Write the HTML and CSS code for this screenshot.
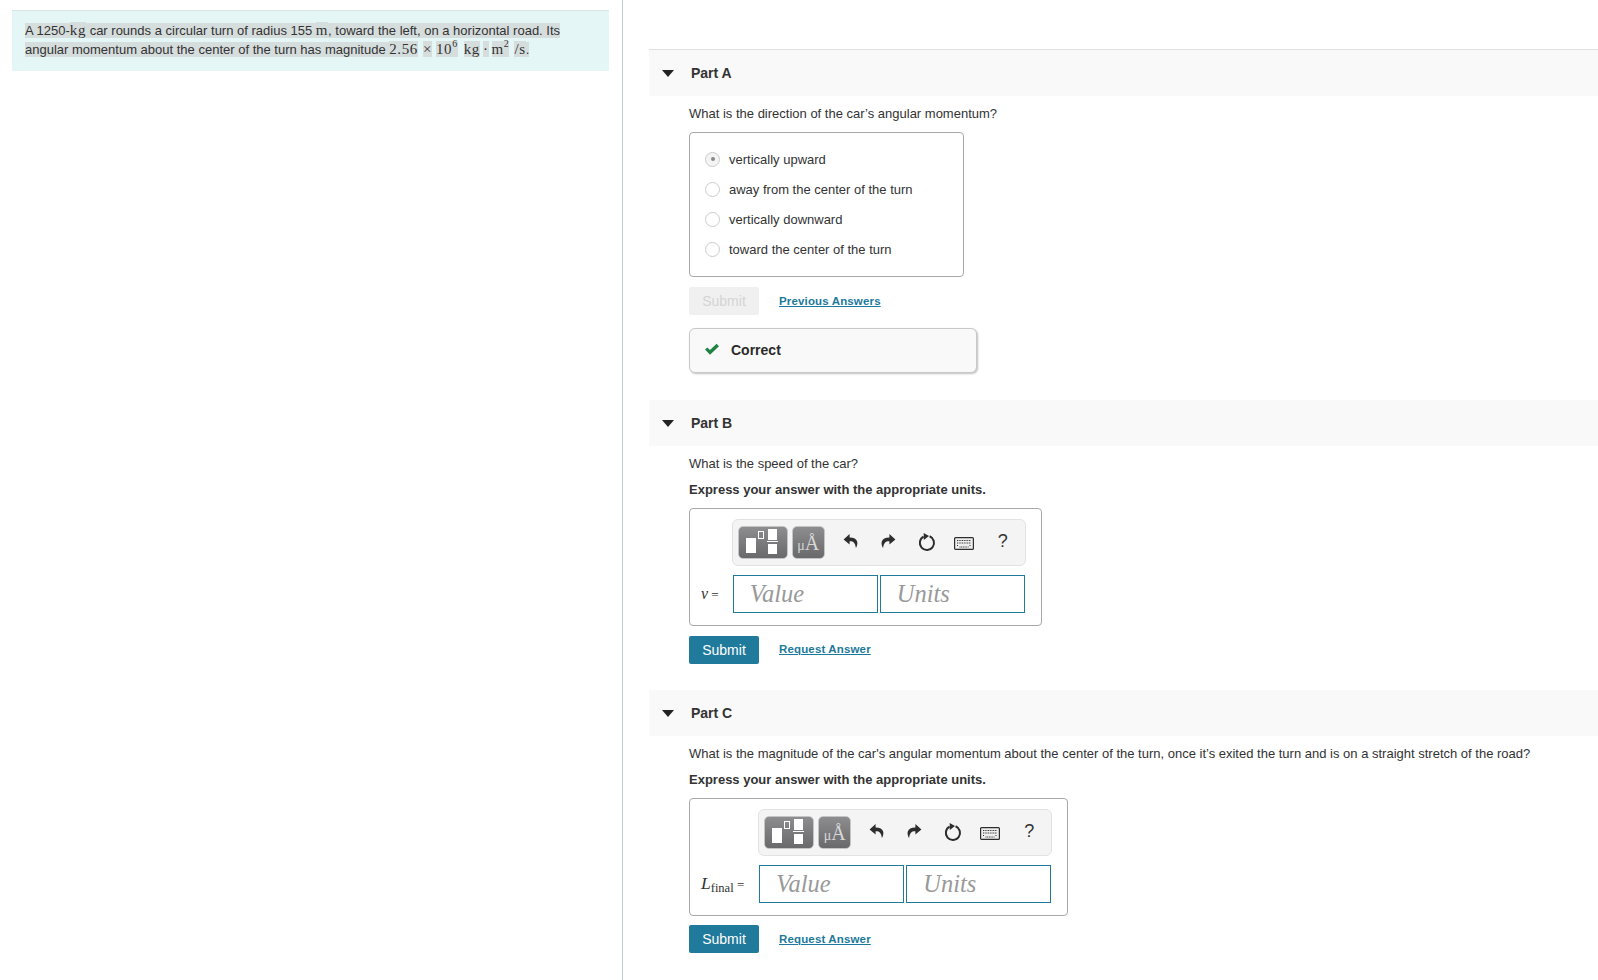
FILE: index.html
```html
<!DOCTYPE html>
<html lang="en">
<head>
<meta charset="utf-8">
<title>Angular momentum</title>
<link rel="stylesheet" href="styles.css">
</head>
<body>
<svg class="defs" width="0" height="0" aria-hidden="true">
  <defs>
    <symbol id="i-undo" viewBox="0 0 16 16"><path d="M6.6 1 L0.6 6.4 L6.6 11.6 V8.3 C10.2 8.1 12.2 9.7 12.9 15 C15.6 10.6 15.4 4.6 6.6 4.4 Z"/></symbol>
    <symbol id="i-reset" viewBox="0 0 18 20"><path class="ring" d="M11.6 4.3 A7.1 7.1 0 1 1 5.6 4.6"/><path d="M5.7 1 L11 4 L5.8 8 Z"/></symbol>
    <symbol id="i-keys" viewBox="0 0 20 13"><rect class="kb" x="0.6" y="0.6" width="18.8" height="11.8" rx="1"/><path class="kd" d="M3 3.5h14M3 6h14M3 8.5h1.5M15.5 8.5H17M5.5 10h9"/></symbol>
  </defs>
</svg>
<div class="page">
  <aside class="left">
    <div class="intro">
      <p class="intro-text"><span class="hl">A 1250-</span><span class="hl m">kg</span><span class="hl"> car rounds a circular turn of radius 155 </span><span class="hl m">m</span><span class="hl">, toward the left, on a horizontal road. Its</span><br><span class="hl">angular momentum about the center of the turn has magnitude </span><span class="hl m">2.56</span><span class="hl m op">×</span><span class="hl m">10<sup>6</sup></span><span class="hl m gap">kg</span><span class="hl m dot">·</span><span class="hl m">m<sup>2</sup></span><span class="hl m sl">/s</span><span class="hl">.</span></p>
    </div>
  </aside>
  <main class="right">
    <section class="part part-a">
      <header class="part-head"><span class="tri"></span><h2 class="part-title">Part A</h2></header>
      <div class="part-body">
        <p class="q">What is the direction of the car’s angular momentum?</p>
        <div class="choices">
          <div class="choice"><span class="radio on"></span><span>vertically upward</span></div>
          <div class="choice"><span class="radio"></span><span>away from the center of the turn</span></div>
          <div class="choice"><span class="radio"></span><span>vertically downward</span></div>
          <div class="choice"><span class="radio"></span><span>toward the center of the turn</span></div>
        </div>
        <div class="actions"><span class="btn off">Submit</span><a class="link" href="#">Previous Answers</a></div>
        <div class="result">
          <svg class="check" viewBox="0 0 16 13" width="16" height="13"><path d="M1 6.6 L3.4 4.4 L6 7 L12.6 .8 L15 3.2 L6 11.8 Z"/></svg>
          <span>Correct</span>
        </div>
      </div>
    </section>

    <section class="part part-b">
      <header class="part-head"><span class="tri"></span><h2 class="part-title">Part B</h2></header>
      <div class="part-body">
        <p class="q">What is the speed of the car?</p>
        <p class="q hint">Express your answer with the appropriate units.</p>
        <div class="answer">
          <div class="toolbar">
            <span class="tool tpl"><svg class="tpl-art" viewBox="0 0 48 33" width="48" height="33"><rect x="7" y="12" width="10" height="15"/><rect class="hollow" x="19.5" y="5.5" width="5" height="7"/><rect x="29" y="3" width="9" height="11"/><rect x="28" y="15" width="11" height="1"/><rect x="29" y="18" width="9" height="10"/></svg></span>
            <span class="tool sym"><span class="mu">μ</span><span class="ang">Å</span></span>
            <span class="acts">
              <svg class="ico"><use href="#i-undo"/></svg>
              <svg class="ico flip"><use href="#i-undo"/></svg>
              <svg class="ico reset"><use href="#i-reset"/></svg>
              <svg class="ico keys"><use href="#i-keys"/></svg>
              <span class="qm">?</span>
            </span>
          </div>
          <div class="eq"><span class="var">v</span> =</div>
          <div class="fields"><div class="field">Value</div><div class="field">Units</div></div>
        </div>
        <div class="actions"><span class="btn">Submit</span><a class="link" href="#">Request Answer</a></div>
      </div>
    </section>

    <section class="part part-c">
      <header class="part-head"><span class="tri"></span><h2 class="part-title">Part C</h2></header>
      <div class="part-body">
        <p class="q">What is the magnitude of the car's angular momentum about the center of the turn, once it’s exited the turn and is on a straight stretch of the road?</p>
        <p class="q hint">Express your answer with the appropriate units.</p>
        <div class="answer">
          <div class="toolbar">
            <span class="tool tpl"><svg class="tpl-art" viewBox="0 0 48 33" width="48" height="33"><rect x="7" y="12" width="10" height="15"/><rect class="hollow" x="19.5" y="5.5" width="5" height="7"/><rect x="29" y="3" width="9" height="11"/><rect x="28" y="15" width="11" height="1"/><rect x="29" y="18" width="9" height="10"/></svg></span>
            <span class="tool sym"><span class="mu">μ</span><span class="ang">Å</span></span>
            <span class="acts">
              <svg class="ico"><use href="#i-undo"/></svg>
              <svg class="ico flip"><use href="#i-undo"/></svg>
              <svg class="ico reset"><use href="#i-reset"/></svg>
              <svg class="ico keys"><use href="#i-keys"/></svg>
              <span class="qm">?</span>
            </span>
          </div>
          <div class="eq eq-l"><span class="var big">L</span><sub class="sub">final</sub> =</div>
          <div class="fields"><div class="field">Value</div><div class="field">Units</div></div>
        </div>
        <div class="actions"><span class="btn">Submit</span><a class="link" href="#">Request Answer</a></div>
      </div>
    </section>
  </main>
</div>
</body>
</html>
```
FILE: styles.css
```css
* { box-sizing: border-box; }
html, body { margin: 0; padding: 0; background: #fff; }
body { font-family: "Liberation Sans", Arial, sans-serif; color: #333; font-size: 13px; overflow: hidden; }
.defs { position: absolute; }
.page { display: flex; height: 980px; overflow: hidden; }

.left { width: 623px; flex: none; border-right: 1px solid #bccddc; padding: 10px 13px 0 12px; }
.intro { background: #e5f6f6; border-top: 1px solid #dbe3e3; padding: 10px 13px; height: 61px; }
.intro-text { margin: 0; font-size: 13px; line-height: 19px; color: #333; white-space: nowrap; }
.hl { background: #d6dddd; }
.m { font-family: "Liberation Serif", serif; font-size: 15px; letter-spacing: .6px; }
.m sup { font-size: 10px; line-height: 0; vertical-align: 7px; }
.op { margin: 0 4px 0 5px; }
.gap { margin-left: 6px; }
.dot { margin: 0 3px 0 3px; }
.sl { margin-left: 5px; }

.right { flex: 1; min-width: 0; padding: 49px 0 0 26px; overflow: hidden; }
.part-a .part-head { border-top: 1px solid #e0e0e0; height: 47px; }
.part-b { margin-top: 27px; }
.part-c { margin-top: 26px; }
.part-head { display: flex; align-items: center; height: 46px; background: #f9f9f9; padding-left: 13px; }
.tri { width: 0; height: 0; border-left: 6.5px solid transparent; border-right: 6.5px solid transparent; border-top: 7px solid #222; }
.part-title { margin: 0 0 0 17px; font-size: 14px; font-weight: bold; color: #333; }
.part-body { padding-left: 40px; }

.q { margin: 8px 0 0; font-size: 13px; line-height: 20px; color: #333; white-space: nowrap; }
.hint { font-weight: bold; margin-top: 6px; }

.choices { width: 275px; height: 145px; margin-top: 8px; border: 1px solid #a8a8a8; border-radius: 4px; padding-top: 11px; }
.choice { display: flex; align-items: center; height: 30px; padding-left: 15px; font-size: 13px; color: #333; }
.radio { width: 15px; height: 15px; border: 1px solid #ccc; border-radius: 50%; margin-right: 9px; background: #fff; display: flex; align-items: center; justify-content: center; }
.radio.on { background: #f4f4f4; }
.radio.on::after { content: ""; width: 4px; height: 4px; border-radius: 50%; background: #888; }

.actions { display: flex; align-items: center; margin-top: 10px; }
.part-c .actions { margin-top: 9px; }
.part-b .link { margin-bottom: 2px; }
.btn { display: block; width: 70px; height: 28px; line-height: 28px; text-align: center; background: #1f7a9c; color: #fff; font-size: 14px; border-radius: 2px; }
.btn.off { background: #f0f0f0; color: #d4d4d4; }
.link { margin-left: 20px; font-size: 11.5px; font-weight: bold; color: #1d7a9c; letter-spacing: .15px; }

.result { display: flex; align-items: center; width: 288px; height: 45px; margin-top: 13px; padding: 0 0 2px 14px; background: #f9f9f9; border: 1px solid #c8c8c8; border-radius: 6px; box-shadow: 1px 1px 2px rgba(0,0,0,.25); font-size: 14px; font-weight: bold; color: #2b2b2b; }
.check { margin-right: 11px; }
.check path { fill: #1f8443; }

.answer { display: grid; grid-template-columns: auto auto; align-content: start; width: fit-content; height: 118px; margin-top: 8px; padding: 10px 15px 0 11px; border: 1px solid #a8a8a8; border-radius: 4px; }
.toolbar { grid-column: 2; display: flex; align-items: center; width: 294px; height: 47px; padding-left: 5px; background: #f4f4f4; border: 1px solid #e2e2e2; border-radius: 6px; }
.tool { display: block; height: 33px; border: 1px solid #c4c4c4; border-radius: 5px; background: linear-gradient(#8d8d90, #69696b); }
.tpl { width: 50px; }
.tpl-art { display: block; margin: -1px 0 0 0; }
.tpl-art rect { fill: #fff; }
.tpl-art .hollow { fill: none; stroke: #fff; stroke-width: 1; }
.sym { width: 33px; margin-left: 4px; color: #d8d8d8; font-family: "Liberation Serif", serif; line-height: 33px; text-align: center; white-space: nowrap; }
.mu { font-size: 14px; }
.ang { font-size: 20px; }
.acts { position: relative; display: block; flex: 1; height: 33px; }
.ico { position: absolute; left: 18px; top: 7px; width: 16px; height: 16px; fill: #2d2d2d; }
.flip { left: 55px; transform: scaleX(-1); }
.ico.reset { left: 93px; top: 6px; width: 18px; height: 20px; }
.ring { fill: none; stroke: #2d2d2d; stroke-width: 2; }
.ico.keys { left: 129px; top: 11px; width: 20px; height: 13px; }
.kb { fill: #eee; stroke: #2d2d2d; stroke-width: 1.2; }
.kd { fill: none; stroke: #333; stroke-width: 1; stroke-dasharray: 1 .7; }
.qm { position: absolute; left: 173px; top: 5px; font-size: 18px; color: #333; line-height: 20px; }

.eq { grid-column: 1; grid-row: 2; padding-right: 13px; margin-top: 9px; height: 38px; line-height: 38px; font-family: "Liberation Serif", serif; font-size: 13px; color: #333; white-space: nowrap; }
.eq-l { line-height: 36px; padding-right: 14px; }
.var { font-style: italic; font-size: 16px; }
.var.big { font-size: 17.5px; }
.sub { font-size: 12.5px; line-height: 0; vertical-align: -3px; }
.fields { grid-column: 2; grid-row: 2; display: flex; gap: 2px; margin: 9px 0 0 1px; }
.field { width: 145px; height: 38px; padding-left: 16px; border: 1px solid #1f7a9c; background: #fff; font-family: "Liberation Serif", serif; font-style: italic; font-size: 24.5px; line-height: 36px; color: #999; }
```
